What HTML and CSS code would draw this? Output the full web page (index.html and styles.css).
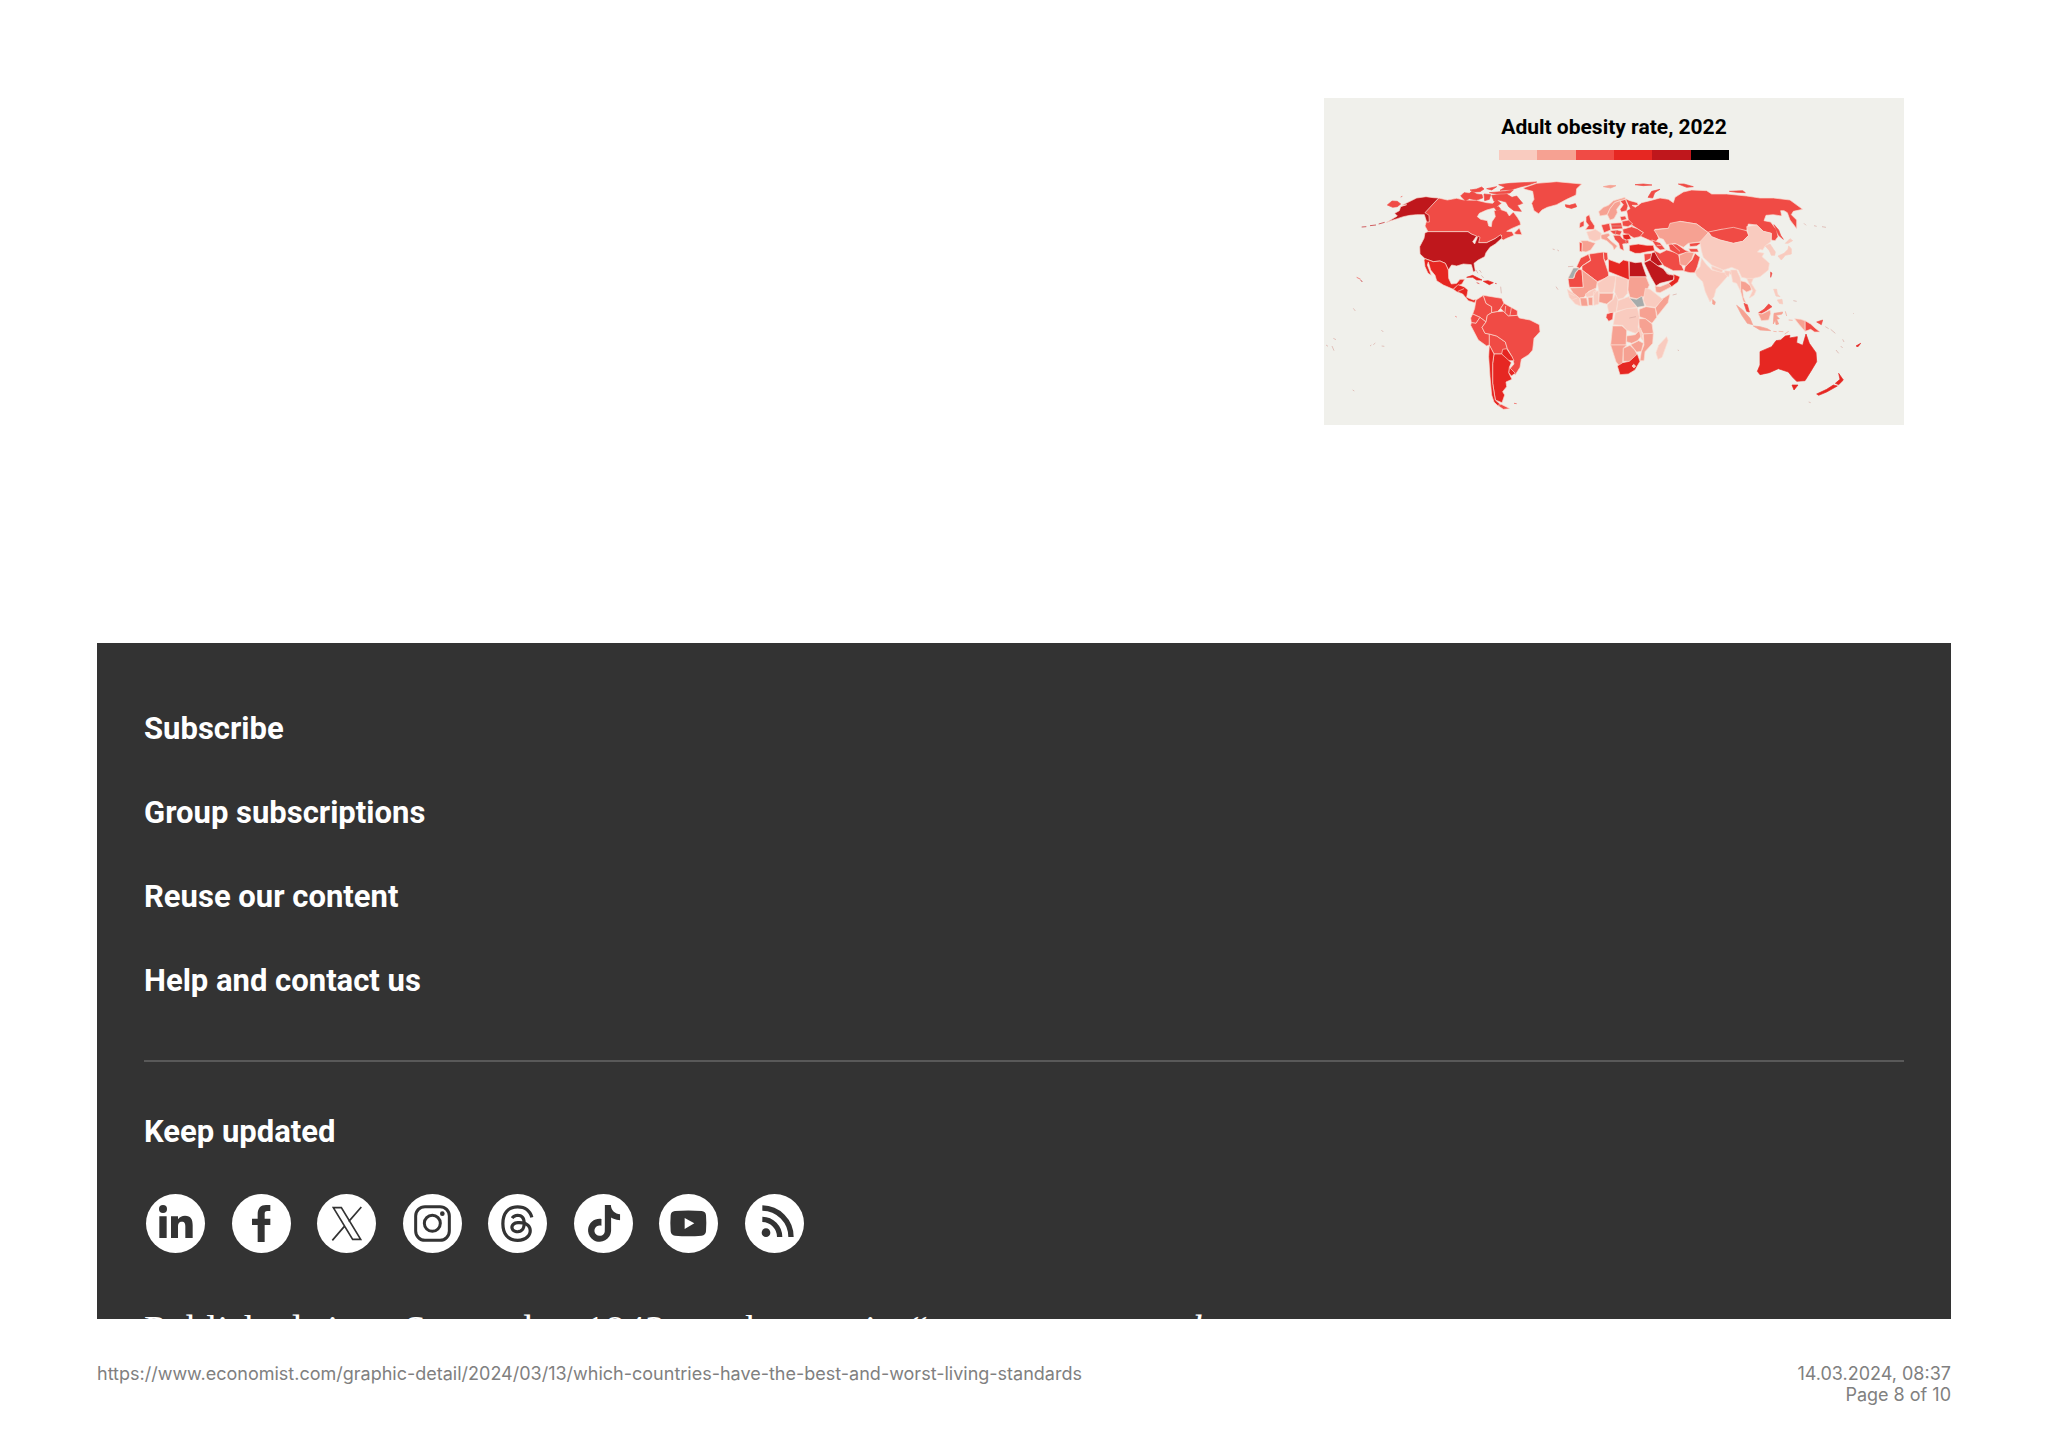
FILE: index.html
```html
<!DOCTYPE html>
<html lang="en">
<head>
    <meta charset="UTF-8">
    <meta name="viewport" content="width=device-width, initial-scale=1.0">
    <title>Which countries have the best, and worst, living standards?</title>
    <link rel="stylesheet" href="styles.css">
</head>
<body>

<main class="related">
    <figure class="card">
        <figcaption>Adult obesity rate, 2022</figcaption>
        <div class="legend">
            <span class="rate1"></span>
            <span class="rate2"></span>
            <span class="rate3"></span>
            <span class="rate4"></span>
            <span class="rate5"></span>
            <span class="rate6"></span>
        </div>
        <svg class="map" viewBox="0 0 1740 759" role="img" aria-label="World map of adult obesity rates">
            <!-- Americas -->
            <g transform="translate(-42 -246)">
                <g class="r3">
                    <path d="M386 324L412 330L440 325L462 330L500 331L530 338L548 340L560 328L575 340L560 352L530 360L508 370L502 380L512 388L532 392L536 408L544 410L546 395L556 380L552 362L570 358L590 365L598 378L610 366L622 382L630 395L632 404L604 416L590 424L606 425L612 436L590 445L580 450L570 445L575 436L555 446L530 458L506 458L500 440L484 432L474 425L354 425L345 408L350 392L344 368Z"/>
                    <path d="M612 430L628 414L636 434L618 433Z"/>
                    <path d="M640 294L680 280L740 275L815 282L800 296L798 315L770 328L740 344L712 352L696 360L686 371L672 362L665 340L672 328L668 304L645 298Z"/>
                    <path d="M765 345L780 346L796 341L800 350L785 356L768 351Z"/>
                    <path d="M498 630L520 616L528 640L545 650L545 668L532 676L528 696L510 682L488 672L494 655Z"/>
                    <path d="M520 616L545 620L575 625L582 640L572 655L562 665L545 668L545 650L528 640Z"/>
                    <path d="M582 640L600 650L622 662L622 676L595 678L580 664L572 655ZM587 648L585 668M604 654L600 676"/>
                    <path d="M488 672L510 682L498 700L484 698L482 684Z"/>
                    <path d="M510 682L528 696L516 712L525 730L538 732L538 765L530 768L505 750L482 706L484 698L498 700Z"/>
                    <path d="M538 732L560 738L586 756L592 776L575 792L552 792L538 765Z"/>
                    <path d="M528 696L532 676L545 668L562 665L580 664L595 678L622 676L628 684L660 690L688 704L690 725L672 745L668 780L656 794L634 808L630 832L616 854L598 838L612 822L606 800L592 776L586 756L560 738L538 732L525 730L516 712Z"/>
                    <path d="M572 942L600 956L580 958L560 944Z"/>
                </g>
                <g class="r3 island">
                    <path d="M232 345L246 333L262 334L272 342L262 350L248 352ZM272 321l5-2"/>
                    <path d="M452 318L462 308L478 310L486 304L500 312L516 314L518 324L500 330L478 326L466 332Z"/>
                    <path d="M480 300L500 297L515 291L522 297L510 305L494 306Z"/>
                    <path d="M530 296L560 290L545 300ZM566 284L600 280L680 276L655 285L630 291L604 299L570 301L585 292ZM538 308L585 304L610 300L600 309L560 312Z"/>
                    <path d="M545 316L590 312L606 322L620 318L638 340L622 346L634 364L612 362L596 350L588 336L566 330L552 334Z"/>
                    <path d="M522 312L542 314L538 328L524 332Z"/>
                    <path d="M552 352L566 350L572 358L560 362Z"/>
                    <path d="M436 679l4 2M140 562l12 6M612 940l8 1"/>
                </g>
                <g class="r5">
                    <path d="M386 324L345 368L357 376L358 396L350 396L343 374L320 374L300 376L280 380L262 386L240 393L228 398L262 378L254 370L268 362L272 350L290 344L276 346L300 334L320 324L348 320L370 323Z"/>
                    <path d="M354 425L474 425L484 432L500 438L488 455L494 462L504 438L510 442L506 458L530 458L555 446L572 434L576 444L556 462L540 472L528 488L524 500L505 510L492 520L496 543L490 546L484 524L460 522L440 528L425 525L415 540L406 520L390 513L370 515L345 506L330 492L329 470L342 445L345 428Z"/>
                    <path class="island" d="M152 570l5 6M155 411l14-1M180 407l18-2M206 402l18-5"/>
                </g>
                <g class="r4">
                    <path d="M345 506L370 515L390 513L406 520L415 540L416 565L424 582L440 580L450 568L464 568L456 582L436 592L430 598L400 585L380 572L375 556L362 540L355 516L352 525L358 540L364 556L354 550L345 530L342 510Z"/>
                    <path d="M430 598L444 584L462 590L474 600L470 622L490 630L498 628L494 638L475 632L458 612L440 605ZM444 604L462 596"/>
                    <path d="M575 792L578 778L590 776L606 800L612 812L590 812Z"/>
                    <path d="M598 832L616 850L604 858L596 848Z"/>
                    <path d="M552 792L575 792L604 818L598 832L596 848L606 868L588 876L590 890L578 905L584 915L576 938L556 930L548 880L548 820Z"/>
                    <path d="M538 765L552 792L548 820L548 880L556 930L572 944L562 946L552 936L545 915L540 860L536 800Z"/>
                    <path class="island" d="M470 562L488 556L516 570L500 570L488 562ZM520 574L534 572L550 578L538 584ZM500 578l8 3M555 580l5 1"/>
                </g>
                <path class="line" d="M498 540l6 10M508 540l6 8M514 556l7 8M572 590l2 20M728 477l6 2M742 480l5 3M130 655l6 8M70 745l8 4M48 765l6 4M66 768l6 14M180 768l4-3M190 764l6-5M214 720l6 6M215 768l8 1M128 900l5 3M738 590l6 9M774 530l16-1"/>
            </g>

            <!-- Europe, Asia, Africa and Oceania -->
            <g transform="translate(708 -6)">
                <g class="r3">
                    <path d="M196 86L210 92L232 98L235 106L216 106L226 112L245 98L270 92L300 84L325 88L340 98L345 82L370 66L395 60L440 62L455 72L500 72L560 78L600 84L640 84L690 90L728 118L700 124L694 134L710 150L710 176L690 150L682 128L672 122L662 122L665 138L640 134L618 136L612 152L632 156L650 180L654 200L645 212L634 210L634 190L610 184L590 165L565 162L560 182L520 182L485 178L445 188L410 162L360 154L325 175L285 178L296 205L285 218L262 208L240 198L250 188L232 176L215 165L205 150L200 122L210 116Z"/>
                    <path d="M180 92L196 88L204 108L200 122L184 126L180 118L190 104Z"/>
                    <path d="M124 165L148 160L152 180L132 188Z"/>
                    <path d="M152 160L184 158L188 176L156 178Z"/>
                    <path d="M180 140L196 138L200 148L184 152ZM186 154L206 150L218 162L204 170L188 168Z"/>
                    <path d="M188 178L215 170L232 176L250 188L240 200L222 204L205 194L190 190Z"/>
                    <path d="M150 182L172 180L186 184L180 196L160 192Z"/>
                    <path d="M160 196L180 196L188 206L206 210L206 220L188 222L192 242L180 236L176 220L164 208Z"/>
                    <path d="M58 216L67 219L66 246L59 244Z"/>
                    <path d="M78 140L88 134L92 150L104 168L102 178L76 179L86 166L78 156Z"/>
                    <path d="M60 158L72 152L72 168L58 174Z"/>
                    <path d="M445 186L485 178L520 172L560 182L566 196L548 214L520 220L480 210L455 200Z"/>
                    <path d="M275 210L300 218L316 238L300 240L288 230ZM290 226L304 226"/>
                    <path d="M280 240L300 250L320 240L355 250L360 275L372 302L340 302L312 288L292 262Z"/>
                    <path d="M372 304L376 288L396 270L405 250L420 262L412 290L405 308L390 308Z"/>
                    <path d="M325 222L350 222L375 240L395 248L378 248L355 254L330 240ZM336 222L360 244"/>
                    <path d="M388 220L428 216L410 228L390 230ZM386 236L412 236L416 246L392 246Z"/>
                    <path d="M50 290L62 264L85 253L92 270L66 288L58 296Z"/>
                    <path d="M88 252L130 246L132 268L145 308L146 320L112 335L66 300L66 288L92 272Z"/>
                    <path d="M130 246L142 248L144 268L136 274L132 266Z"/>
                    <path d="M24 325L42 324L46 310L56 298L66 300L70 352L28 352Z"/>
                    <path d="M140 432L160 425L158 448L146 454L138 442Z"/>
                    <path d="M735 452L752 462L765 474L780 486L764 486L752 478L735 484Z"/>
                    <path d="M252 252L276 250L274 264L254 276Z"/>
                </g>
                <g class="r3 island">
                    <path d="M264 82L275 64L300 58L284 68L278 84ZM225 44L250 42L276 45L250 47ZM355 42L372 42L400 50L380 52ZM508 64L548 62L556 68L530 67Z"/>
                    <path d="M642 164L656 180L662 196L670 208L656 196ZM16 104L28 106L46 101L50 110L34 115L18 111Z"/>
                    <path d="M552 400L562 404L568 426L560 424ZM596 428L612 418L626 402L636 410L618 422L604 430Z"/>
                    <path d="M632 306L636 310L632 322ZM770 456L788 450L784 464Z"/>
                </g>
                <g class="r2">
                    <path d="M116 125L130 112L145 106L160 92L195 82L196 88L180 92L164 98L150 116L142 134L120 138Z"/>
                    <path d="M150 116L164 98L180 92L182 102L170 118L172 128L162 146L150 150L142 134Z"/>
                    <path d="M62 212L82 212L106 220L92 240L78 246L66 244L67 220Z"/>
                    <path d="M122 195L145 190L150 196L142 202L154 214L172 228L162 240L158 228L140 212L124 206Z"/>
                    <path d="M282 180L325 175L330 160L360 154L410 162L445 188L425 215L385 220L370 232L345 220L320 224L310 208L298 204Z"/>
                    <path d="M358 256L380 246L402 248L395 268L378 288L360 284Z"/>
                    <path d="M285 348L300 350L330 338L334 350L300 368L288 366Z"/>
                    <path d="M66 300L112 335L108 355L86 364L72 382L58 384L40 370L30 354L70 352Z"/>
                    <path d="M206 320L258 320L268 345L252 380L230 386L210 382L204 360Z"/>
                    <path d="M305 388L330 372L324 398L292 438L286 414Z"/>
                    <path d="M118 370L160 370L158 388L140 402L116 396Z"/>
                    <path d="M60 384L80 384L84 408L64 408ZM84 382L98 382L98 406L86 406Z"/>
                    <path d="M238 418L258 410L286 414L290 442L276 460L256 446L238 440Z"/>
                    <path d="M236 446L256 446L276 462L280 490L250 492L238 472Z"/>
                    <path d="M158 468L186 468L200 480L198 525L152 525Z"/>
                    <path d="M200 498L226 494L240 478L248 494L232 512L215 520L200 515Z"/>
                    <path d="M250 492L280 490L278 520L255 545L252 572L240 572L244 545L252 525Z"/>
                    <path d="M152 525L200 525L190 535L188 578L178 588L168 575Z"/>
                    <path d="M190 535L210 526L224 540L232 554L208 574L190 574Z"/>
                    <path d="M212 524L236 512L250 520L244 544L230 546Z"/>
                    <path d="M540 332L556 336L572 348L574 360L560 366L548 358L550 380L558 400L550 394L542 364Z"/>
                    <path d="M704 446L722 448L735 452L735 484L716 462Z"/>
                    <path d="M594 430L606 432L630 420L632 430L626 450L604 452Z"/>
                </g>
                <g class="r2 island">
                    <path d="M130 50L150 46L168 47L152 54ZM530 406L548 420L570 445L578 464L562 460L545 435ZM458 388L466 396L464 404L458 402Z"/>
                    <path d="M580 468L600 470L622 476L632 482L600 480ZM642 430L668 426L666 432L648 436L658 446L650 448L656 462L648 464L646 450L640 462ZM676 424l4 14M686 450l12 1M640 484l10 1M656 484l14 1M674 492l12-8"/>
                </g>
                <g class="r1">
                    <path d="M80 186L96 182L106 178L124 190L120 208L104 214L88 208Z"/>
                    <path d="M445 188L455 200L480 210L520 220L548 214L566 196L560 170L590 165L610 184L634 190L632 215L615 228L608 240L600 238L592 246L612 250L606 260L628 280L625 300L600 320L580 325L560 325L545 322L535 300L515 292L490 300L455 285L430 262L424 240L420 215Z"/>
                    <path d="M405 305L420 290L425 265L440 285L455 300L490 308L530 300L520 320L508 310L500 322L468 358L462 380L450 396L436 365L428 335L410 318Z"/>
                    <path d="M455 288L488 300L486 308L456 298ZM494 302L510 304L506 320L496 314Z"/>
                    <path d="M512 300L530 300L540 322L542 332L542 364L530 340L518 336Z"/>
                    <path d="M560 325L580 325L574 340L588 362L582 376L568 384L578 362L570 346Z"/>
                    <path d="M112 340L145 318L168 318L162 355L158 368L118 368Z"/>
                    <path d="M168 318L204 328L202 370L190 384L174 388L164 366Z"/>
                    <path d="M256 355L270 358L308 388L286 412L258 408L250 390Z"/>
                    <path d="M100 366L116 362L116 402L102 406ZM76 372L104 356L110 364L98 378L80 382Z"/>
                    <path d="M22 358L40 370L58 384L62 408L46 402L28 382ZM28 370L44 378M36 390L52 384"/>
                    <path d="M142 404L160 388L166 372L174 390L168 426L146 428Z"/>
                    <path d="M174 392L206 380L230 412L200 416L170 424Z"/>
                    <path d="M166 428L200 416L232 414L238 440L234 472L238 482L226 490L200 480L188 466L160 464Z"/>
                    <path d="M320 500L324 512L306 562L294 568L288 548L296 526Z"/>
                    <path d="M236 474L242 474L250 512L244 506Z"/>
                </g>
                <g class="r1 island">
                    <path d="M654 258L672 250L684 238L686 228L694 236L694 252L676 256L664 270ZM676 220L690 206L698 212L684 220ZM616 228L630 222L646 246L644 256L634 256L628 242Z"/>
                    <path d="M641 358L650 358L652 372L660 380L648 378ZM652 390L666 388L668 402L658 400Z"/>
                </g>
                <g class="r4">
                    <path d="M208 226L235 222L260 226L280 226L284 242L258 246L240 250L225 250L208 242Z"/>
                    <path d="M188 194L206 192L214 206L200 210L190 206Z"/>
                    <path d="M145 268L178 280L190 270L206 274L208 330L146 305Z"/>
                    <path d="M340 312L360 320L354 336L335 350L326 340L342 328Z"/>
                    <path d="M172 588L188 578L208 574L232 552L240 574L225 600L205 612L180 614Z"/>
                    <path class="island" d="M600 545L635 530L648 512L662 510L676 498L690 496L688 504L712 500L710 518L728 526L738 492L748 520L768 548L770 575L752 605L735 632L710 634L698 622L685 606L655 596L628 608L600 614L592 604L600 585Z"/>
                    <path class="island" d="M696 645L714 645L702 660ZM770 672L800 658L820 645L832 648L800 666L776 676ZM826 640L840 628L836 610L850 630L836 644ZM888 528L902 520L894 530Z"/>
                </g>
                <g class="r5">
                    <path d="M208 274L226 278L245 276L250 292L260 320L208 320Z"/>
                    <path d="M276 248L284 246L294 264L308 284L294 288L270 272Z"/>
                    <path d="M252 278L270 270L294 288L310 296L322 312L342 316L340 330L300 340L288 348L272 320Z"/>
                </g>
                <g class="r0">
                    <path d="M24 325L40 294L58 294L46 308L40 325Z"/>
                    <path d="M208 384L230 388L246 378L254 408L232 412Z"/>
                </g>
                <path class="sea" d="M216 588l5-5 6 5-5 6Z"/>
                <path class="line" d="M154 168L186 168M168 180L166 196M194 206L200 222M218 172L214 166M208 444L228 440M312 300L330 316M350 372l-12 3M353 540l4 2M732 160l6 6M762 167l8 2M786 170l12 2M700 392l10 2M796 470l10 6M812 478l14 12M848 508l4 8M828 540l8 10M842 528l6 6M880 430l2 2M746 696l6 2"/>
            </g>
        </svg>
    </figure>
</main>

<footer class="site-footer">
    <ul class="links">
        <li><a href="#">Subscribe</a></li>
        <li><a href="#">Group subscriptions</a></li>
        <li><a href="#">Reuse our content</a></li>
        <li><a href="#">Help and contact us</a></li>
    </ul>

    <h2>Keep updated</h2>
    <div class="social">
        <a href="#" aria-label="LinkedIn">
            <svg viewBox="0 0 177 177"><circle cx="51" cy="45" r="12"/><path d="M40 67h22v65H40zM75 67h21v9c5-7 12-11 21-11 18 0 23 12 23 29v38h-22V98c0-9-2-15-10-15-9 0-12 6-12 15v34H75z"/></svg>
        </a>
        <a href="#" aria-label="Facebook">
            <svg viewBox="0 0 177 177"><path d="M77 144V93H60V74h17V60c0-17 9-27 25-27h13v18h-9c-6 0-8 3-8 8v15h17v19H98v51z"/></svg>
        </a>
        <a href="#" aria-label="X">
            <svg viewBox="0 0 177 177"><path class="stroke thin" d="M49 41h24l58 95h-24zM133 39L95 83M46 139L84 95"/></svg>
        </a>
        <a href="#" aria-label="Instagram">
            <svg viewBox="0 0 177 177"><rect class="stroke" x="38" y="38" width="101" height="101" rx="28"/><circle class="stroke" cx="88" cy="88" r="24"/><circle cx="118" cy="59" r="7"/></svg>
        </a>
        <a href="#" aria-label="Threads">
            <svg viewBox="0 0 177 177"><path transform="translate(33 34) scale(4.58)" d="M12.186 24h-.007c-3.581-.024-6.334-1.205-8.184-3.509C2.35 18.44 1.5 15.586 1.472 12.01v-.017c.03-3.579.879-6.43 2.525-8.482C5.845 1.205 8.6.024 12.18 0h.014c2.746.02 5.043.725 6.826 2.098 1.677 1.29 2.858 3.13 3.509 5.467l-2.04.569c-1.104-3.96-3.898-5.984-8.304-6.015-2.91.022-5.11.936-6.54 2.717C4.307 6.504 3.616 8.914 3.589 12c.027 3.086.718 5.496 2.057 7.164 1.43 1.783 3.631 2.698 6.54 2.717 2.623-.02 4.358-.631 5.8-2.045 1.647-1.613 1.618-3.593 1.09-4.798-.31-.71-.873-1.3-1.634-1.75-.192 1.352-.622 2.446-1.284 3.272-.886 1.102-2.14 1.704-3.73 1.79-1.202.065-2.361-.218-3.259-.801-1.063-.689-1.685-1.74-1.752-2.964-.065-1.19.408-2.285 1.33-3.082.88-.76 2.119-1.207 3.583-1.291a13.853 13.853 0 0 1 3.02.142c-.126-.742-.375-1.332-.75-1.757-.513-.586-1.308-.883-2.359-.89h-.029c-.844 0-1.992.232-2.721 1.32L7.734 7.847c.98-1.454 2.568-2.256 4.478-2.256h.044c3.194.02 5.097 1.975 5.287 5.388.108.046.216.094.321.142 1.49.7 2.58 1.761 3.154 3.07.797 1.82.871 4.79-1.548 7.158-1.85 1.81-4.094 2.628-7.277 2.65Zm1.003-11.69c-.242 0-.487.007-.739.021-1.836.103-2.98.946-2.916 2.143.067 1.256 1.452 1.839 2.784 1.767 1.224-.065 2.818-.543 3.086-3.71a10.5 10.5 0 0 0-2.215-.221z"/></svg>
        </a>
        <a href="#" aria-label="TikTok">
            <svg viewBox="0 0 177 177"><path transform="translate(35 33) scale(4.6)" d="M12.525.02c1.31-.02 2.61-.01 3.91-.02.08 1.53.63 3.09 1.75 4.17 1.12 1.11 2.7 1.62 4.24 1.79v4.03c-1.44-.05-2.89-.35-4.2-.97-.57-.26-1.1-.59-1.62-.93-.01 2.92.01 5.84-.02 8.75-.08 1.4-.54 2.79-1.35 3.94-1.31 1.92-3.58 3.17-5.91 3.21-1.43.08-2.86-.31-4.08-1.03-2.02-1.19-3.44-3.37-3.65-5.71-.02-.5-.03-1-.01-1.49.18-1.9 1.12-3.72 2.58-4.96 1.66-1.44 3.98-2.13 6.15-1.72.02 1.48-.04 2.96-.04 4.44-.99-.32-2.15-.23-3.02.37-.63.41-1.11 1.04-1.36 1.75-.21.51-.15 1.07-.14 1.61.24 1.64 1.82 3.02 3.5 2.87 1.12-.01 2.19-.66 2.77-1.61.19-.33.4-.67.41-1.06.1-1.79.06-3.57.07-5.36.01-4.03-.01-8.05.02-12.07z"/></svg>
        </a>
        <a href="#" aria-label="YouTube">
            <svg viewBox="0 0 177 177"><path fill-rule="evenodd" d="M48 51Q88 48 128 51Q140 52 141 64Q143 88 141 112Q140 124 128 125Q88 128 48 125Q36 124 35 112Q33 88 35 64Q36 52 48 51ZM77 72v33l29-17z"/></svg>
        </a>
        <a href="#" aria-label="RSS">
            <svg viewBox="0 0 177 177"><circle cx="63" cy="116" r="13"/><path class="stroke thick" d="M52 76A53 53 0 0 1 104 129M52 42A87 87 0 0 1 138 129"/></svg>
        </a>
    </div>

    <p class="mission">Published since September 1843 to take part in <i>“a severe contest between</i></p>
</footer>

<div class="print-info">
    <span>https://www.economist.com/graphic-detail/2024/03/13/which-countries-have-the-best-and-worst-living-standards</span>
    <span class="page">14.03.2024, 08:37<br>Page 8 of 10</span>
</div>

</body>
</html>
```
FILE: styles.css
```css
body {
    font-family: Roboto, "Liberation Sans", sans-serif;
    background-color: #fff;
    margin: 0;
    padding: 98px 97px 0;
}

.related {
    display: flex;
    justify-content: flex-end;
    padding: 0 47px;
    margin-bottom: 218px;
}

.card {
    box-sizing: border-box;
    width: 580px;
    margin: 0;
    padding-top: 16px;
    background-color: #f0f0eb;
}

.card figcaption {
    color: #000;
    font-size: 21px;
    font-weight: bold;
    line-height: 26px;
    text-align: center;
}

.legend {
    display: flex;
    width: 230px;
    height: 10px;
    margin: 10px auto 12px;
}

.legend span {
    flex: 1;
}

.rate1 { background-color: #f9cbbf; }
.rate2 { background-color: #f6a192; }
.rate3 { background-color: #f04b45; }
.rate4 { background-color: #e62722; }
.rate5 { background-color: #bf171c; }
.rate6 { background-color: #000; }

.map {
    display: block;
    width: 100%;
    stroke: #fbdcd2;
    stroke-width: 2;
    stroke-linejoin: round;
}

.r0 { fill: #a5abab; }
.r1 { fill: #f9cbbf; }
.r2 { fill: #f6a192; }
.r3 { fill: #f04b45; }
.r4 { fill: #e62722; }
.r5 { fill: #bf171c; }

.map .sea {
    fill: #f9cbbf;
}

.map .line {
    fill: none;
    stroke: #d9a9a1;
}

.r1.island { stroke: #f9cbbf; }
.r2.island { stroke: #f6a192; }
.r3.island { stroke: #f04b45; }
.r4 .island { stroke: #e62722; }
.r5 .island { stroke: #bf171c; }

.site-footer {
    padding: 68px 47px 0;
    background-color: #333;
    color: #fff;
    overflow: hidden;
}

.links {
    display: flex;
    flex-direction: column;
    gap: 48px;
    margin: 0;
    padding: 0 0 61px;
    border-bottom: 2px solid #595959;
    list-style: none;
}

.links a,
.site-footer h2 {
    color: #fff;
    font-size: 31px;
    font-weight: bold;
    line-height: 36px;
    text-decoration: none;
}

.links li {
    height: 36px;
}

.site-footer h2 {
    margin: 52px 0 44px;
}

.social {
    display: flex;
    justify-content: space-between;
    width: 658px;
    max-width: 100%;
    padding-left: 2px;
}

.social a {
    width: 59px;
    height: 59px;
    border-radius: 50%;
    background-color: #fff;
}

.social svg {
    display: block;
    fill: #333;
}

.social .stroke {
    fill: none;
    stroke: #333;
    stroke-width: 9;
}

.social .thin {
    stroke-width: 5;
}

.social .thick {
    stroke-width: 16;
}

/* last line is cut by the page break */
.mission {
    height: 7px;
    margin: 59px 0 0;
    overflow: hidden;
    font-family: "Liberation Serif", serif;
    font-size: 40px;
    line-height: 36px;
}

.print-info {
    display: flex;
    justify-content: space-between;
    margin-top: 44px;
    color: #808080;
    font-family: Inter, sans-serif;
    font-size: 18px;
    line-height: 21px;
}

.page {
    text-align: right;
}
```
